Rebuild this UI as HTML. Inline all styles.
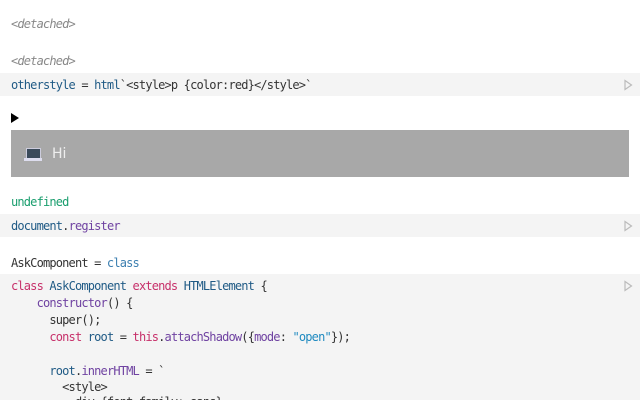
<!DOCTYPE html>
<html style="overflow:hidden;height:400px"><head><meta charset="utf-8"><style>
*{margin:0;padding:0}
body{width:640px;height:400px;overflow:hidden;background:#fff;position:relative;font-family:"DejaVu Sans Mono","Liberation Mono",monospace;font-size:12px;letter-spacing:-0.83px;color:#333}
.l{position:absolute;left:11px;white-space:pre;line-height:14px}
.bg{position:absolute;left:0;width:640px;background:#f4f4f4}
.it{font-style:italic;color:#888}
.v{color:#1f5a85}.k{color:#c7306a}.p{color:#6f42a1}.s{color:#1f8ac0}.g{color:#1a9e6e}.c{color:#1f5a85}.t{color:#3c7fb0}
</style></head><body>
<div class="l it" style="top:17px">&lt;detached&gt;</div>
<div class="l it" style="top:54px">&lt;detached&gt;</div>
<div class="bg" style="top:73px;height:23px"></div>
<div class="l" style="top:78px"><span class="v">otherstyle</span> = <span class="v">html</span>`&lt;style&gt;p {color:red}&lt;/style&gt;`</div>
<svg style="position:absolute;left:623px;top:79px" width="10" height="12"><path d="M2 1.5 L8.5 6 L2 10.5 Z" fill="none" stroke="#bbb" stroke-width="1.2"/></svg>
<div style="position:absolute;left:11px;top:113px;width:0;height:0;border-left:8px solid #000;border-top:5px solid transparent;border-bottom:5px solid transparent"></div>
<div style="position:absolute;left:11px;top:130px;width:618px;height:47px;background:#a8a8a8"></div>
<div style="position:absolute;left:26px;top:148px;width:13px;height:9px;background:#3a4a5a;border:1px solid #ccd"></div>
<div style="position:absolute;left:24px;top:158px;width:18px;height:3px;background:#dde"></div>
<div style="position:absolute;left:52px;top:146px;font-family:'DejaVu Sans','Liberation Sans',sans-serif;font-size:14px;letter-spacing:0;color:#eee">Hi</div>
<div class="l g" style="top:195px">undefined</div>
<div class="bg" style="top:214px;height:23px"></div>
<div class="l" style="top:219px"><span class="c">document</span>.<span class="p">register</span></div>
<svg style="position:absolute;left:623px;top:220px" width="10" height="12"><path d="M2 1.5 L8.5 6 L2 10.5 Z" fill="none" stroke="#bbb" stroke-width="1.2"/></svg>
<div class="l" style="top:256px">AskComponent = <span class="t">class</span></div>
<div class="bg" style="top:274px;height:126px"></div>
<svg style="position:absolute;left:623px;top:280px" width="10" height="12"><path d="M2 1.5 L8.5 6 L2 10.5 Z" fill="none" stroke="#bbb" stroke-width="1.2"/></svg>
<div class="l" style="top:279px"><span class="k">class</span> <span class="v">AskComponent</span> <span class="k">extends</span> <span class="v">HTMLElement</span> {</div>
<div class="l" style="top:296px">    <span class="p">constructor</span>() {</div>
<div class="l" style="top:313px">      super();</div>
<div class="l" style="top:330px">      <span class="k">const</span> <span class="v">root</span> = <span class="k">this</span>.<span class="p">attachShadow</span>({<span class="p">mode</span>: <span class="s">"open"</span>});</div>
<div class="l" style="top:364px">      <span class="v">root</span>.<span class="p">innerHTML</span> = `</div>
<div class="l" style="top:380px">        &lt;style&gt;</div>
<div class="l" style="top:395px">          div {font-family: sans}</div>
</body></html>
